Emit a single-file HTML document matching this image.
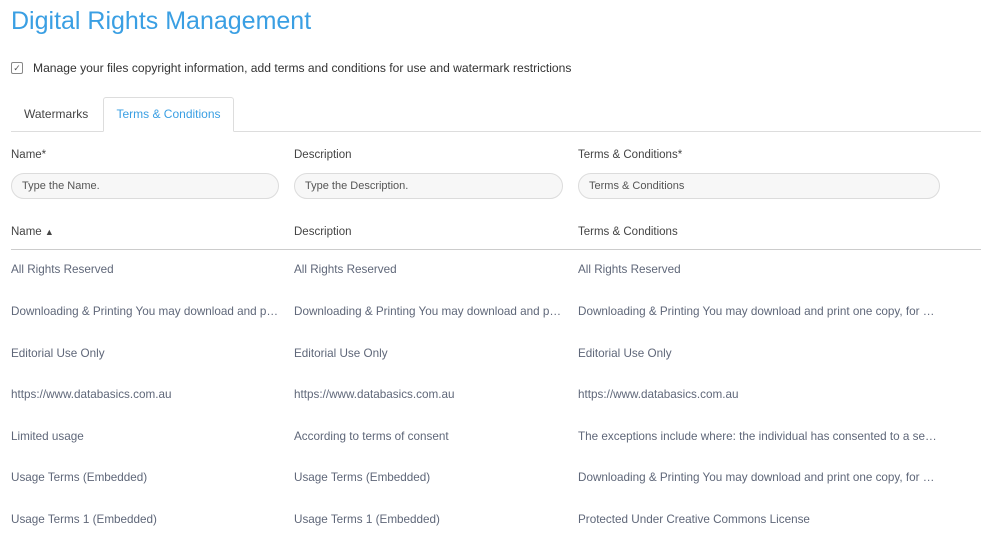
<!DOCTYPE html>
<html><head><style>
body{margin:0;width:981px;height:537px;overflow:hidden;background:#fff;font-family:"Liberation Sans",sans-serif;position:relative}
.a{position:absolute;white-space:nowrap}
h1{position:absolute;left:11px;top:7px;margin:0;font-weight:normal;font-size:25px;color:#3a9fe3}
.lbl{font-size:11.5px;color:#444}
.inp{position:absolute;top:173px;height:24px;border:1px solid #dcdcdc;border-radius:13px;background:#f7f7f7;font-size:11px;color:#555;line-height:24px;padding-left:10px;box-sizing:content-box}
.d{font-size:11.7px;color:#5f6779;width:268px;overflow:hidden;text-overflow:ellipsis}
</style></head><body>
<h1>Digital Rights Management</h1>
<div class="a" style="left:11px;top:62px;width:10px;height:10px;border:1px solid #888;border-radius:2px;font-size:9px;line-height:10px;text-align:center;color:#555">✓</div>
<div class="a" style="left:33px;top:61px;font-size:12.1px;color:#333">Manage your files copyright information, add terms and conditions for use and watermark restrictions</div>
<div class="a" style="left:11px;top:131px;width:970px;height:1px;background:#ddd"></div>
<div class="a" style="left:24px;top:107px;font-size:12px;color:#444">Watermarks</div>
<div class="a" style="left:103px;top:97px;width:131px;height:35px;border:1px solid #ddd;border-bottom:1px solid #fff;border-radius:3px 3px 0 0;background:#fff;box-sizing:border-box;font-size:12px;color:#3a9fe3;text-align:center;line-height:33px">Terms &amp; Conditions</div>
<div class="a lbl" style="left:11px;top:149px">Name*</div>
<div class="a lbl" style="left:294px;top:149px">Description</div>
<div class="a lbl" style="left:578px;top:149px">Terms &amp; Conditions*</div>
<div class="inp" style="left:11px;width:256px">Type the Name.</div>
<div class="inp" style="left:294px;width:257px">Type the Description.</div>
<div class="inp" style="left:578px;width:350px">Terms &amp; Conditions</div>
<div class="a lbl" style="left:11px;top:226px">Name <span style="font-size:9px">▲</span></div>
<div class="a lbl" style="left:294px;top:226px">Description</div>
<div class="a lbl" style="left:578px;top:226px">Terms &amp; Conditions</div>
<div class="a" style="left:11px;top:249px;width:970px;height:1px;background:#ccc"></div>

<div class="a d" style="left:11px;top:263px">All Rights Reserved</div>
<div class="a d" style="left:294px;top:263px">All Rights Reserved</div>
<div class="a d" style="left:578px;top:263px;width:362px">All Rights Reserved</div>

<div class="a d" style="left:11px;top:305px">Downloading &amp; Printing You may download and print one copy</div>
<div class="a d" style="left:294px;top:305px">Downloading &amp; Printing You may download and print one copy</div>
<div class="a d" style="left:578px;top:305px;width:362px">Downloading &amp; Printing You may download and print one copy, for your own use</div>

<div class="a d" style="left:11px;top:347px">Editorial Use Only</div>
<div class="a d" style="left:294px;top:347px">Editorial Use Only</div>
<div class="a d" style="left:578px;top:347px;width:362px">Editorial Use Only</div>

<div class="a d" style="left:11px;top:388px">https://www.databasics.com.au</div>
<div class="a d" style="left:294px;top:388px">https://www.databasics.com.au</div>
<div class="a d" style="left:578px;top:388px;width:362px">https://www.databasics.com.au</div>

<div class="a d" style="left:11px;top:430px">Limited usage</div>
<div class="a d" style="left:294px;top:430px">According to terms of consent</div>
<div class="a d" style="left:578px;top:430px;width:362px">The exceptions include where: the individual has consented to a secondary use</div>

<div class="a d" style="left:11px;top:471px">Usage Terms (Embedded)</div>
<div class="a d" style="left:294px;top:471px">Usage Terms (Embedded)</div>
<div class="a d" style="left:578px;top:471px;width:362px">Downloading &amp; Printing You may download and print one copy, for your own use</div>

<div class="a d" style="left:11px;top:513px">Usage Terms 1 (Embedded)</div>
<div class="a d" style="left:294px;top:513px">Usage Terms 1 (Embedded)</div>
<div class="a d" style="left:578px;top:513px;width:362px">Protected Under Creative Commons License</div>
</body></html>
